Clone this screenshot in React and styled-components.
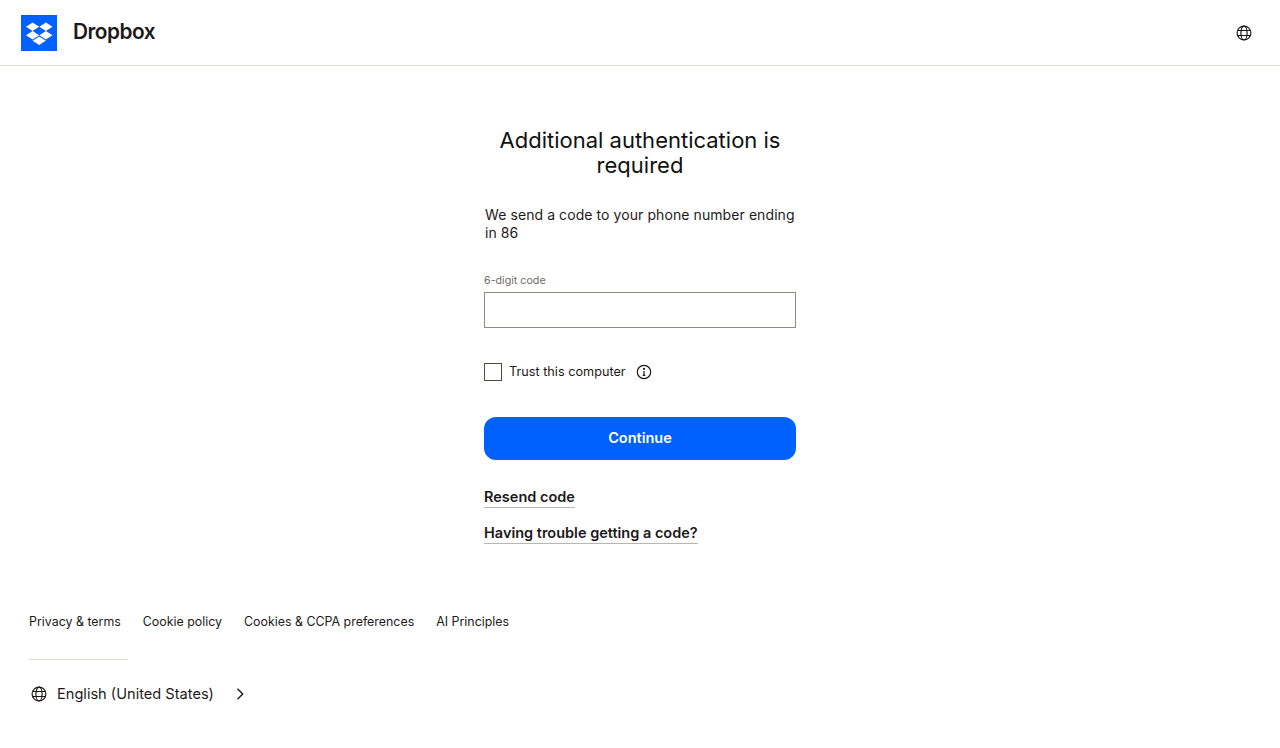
import React from "react";
import styled, { createGlobalStyle } from "styled-components";

const Global = createGlobalStyle`
  html, body { margin: 0; padding: 0; background: #fff; }
  body { font-family: "Inter", "Liberation Sans", sans-serif; color: #1e1919; }
  * { box-sizing: border-box; }
`;
const Page = styled.div`height: 748px; display: flex; flex-direction: column; overflow: hidden;`;
const Header = styled.header`height: 66px; flex: none; border-bottom: 1px solid #dfdcd8; display: flex; align-items: center; justify-content: space-between; padding: 1px 28px 0 21px;`;
const Brand = styled.div`display: flex; align-items: center; gap: 16px;`;
const Wordmark = styled.span`font-size: 20.8px; font-weight: 600; letter-spacing: -0.5px; color: #1e1919; margin-top: -4px;`;
const Main = styled.main`width: 312px; margin: 62px auto 0; flex: none;`;
const Title = styled.h1`margin: 0 0 28px; font-size: 22px; line-height: 25px; font-weight: 400; text-align: center; color: #111;`;
const Lead = styled.p`margin: 0 0 32px; padding-left: 1px; font-size: 14px; letter-spacing: 0.08px; line-height: 18px; color: #1e1919;`;
const FieldLabel = styled.label`display: block; font-size: 10.7px; line-height: 14px; color: #736c64; margin-bottom: 4px;`;
const Input = styled.input`display: block; width: 100%; height: 36px; border: 1px solid #8d8983; background: #fff; outline: none;`;
const TrustRow = styled.div`display: flex; align-items: center; margin-top: 35px; height: 18px; font-size: 12.7px; color: #1e1919;`;
const TrustLabel = styled.span`padding-bottom: 2px;`;
const Box = styled.span`width: 18px; height: 18px; border: 1px solid #4e4a45; margin-right: 7px;`;
const InfoWrap = styled.span`display: flex; margin-left: 10px;`;
const Primary = styled.button`display: block; width: 100%; height: 43px; margin-top: 36px; padding: 0 0 2px; border: 0; border-radius: 12px; background: #0061fe; color: #fff; font: 600 14.5px "Inter", sans-serif;`;
const Links = styled.div`display: flex; flex-direction: column; align-items: flex-start; gap: 14px; margin-top: 26px;`;
const TextLink = styled.a`font-size: 14.5px; line-height: 21px; font-weight: 600; color: #1e1919; border-bottom: 1px solid #bbb5ae;`;
const Footer = styled.footer`margin-top: 69px; padding-left: 29px;`;
const FootLinks = styled.nav`display: flex; gap: 22px; font-size: 12.4px; line-height: 18px; color: #1e1919;`;
const Rule = styled.hr`width: 99px; height: 1px; border: 0; background: #dfdcd8; margin: 28px 0 0;`;
const Lang = styled.div`display: flex; align-items: center; margin: 25px 0 0 2px; font-size: 14.6px; line-height: 18px;`;
const LangLabel = styled.span`margin: 0 19px 0 10px;`;

const Globe = () => (
  <svg width="16" height="16" viewBox="0 0 16 16" fill="none" stroke="#1e1919" strokeWidth="1.2">
    <circle cx="8" cy="8" r="6.9" />
    <ellipse cx="8" cy="8" rx="3.1" ry="6.9" />
    <path d="M1.6 5.5h12.8M1.6 10.5h12.8" />
  </svg>
);
const Logo = () => (
  <svg width="36" height="36" viewBox="0 0 36 36">
    <rect width="36" height="36" fill="#0061fe" />
    <path fill="#fff" d="M11.6 7.6 5 11.8l6.6 4.2 6.6-4.2zM24.9 7.6l-6.6 4.2 6.6 4.2 6.6-4.2zM5 20.2l6.6 4.2 6.6-4.2-6.6-4.2zM24.9 16l-6.6 4.2 6.6 4.2 6.6-4.2zM11.6 25.8l6.6 4.2 6.6-4.2-6.6-4.2z" />
  </svg>
);
const Info = () => (
  <svg width="16" height="16" viewBox="0 0 16 16" fill="none" stroke="#1e1919" strokeWidth="1.2">
    <circle cx="8" cy="8" r="6.7" />
    <path d="M8 7v4.4M6.7 11.4h2.6" />
    <circle cx="8" cy="4.8" r=".5" fill="#1e1919" />
  </svg>
);
const Chevron = () => (
  <svg width="14" height="14" viewBox="0 0 14 14" fill="none" stroke="#1e1919" strokeWidth="1.4">
    <path d="M4.5 1.8 9.7 7l-5.2 5.2" />
  </svg>
);

export default function App() {
  return (
    <Page>
      <Global />
      <Header>
        <Brand><Logo /><Wordmark>Dropbox</Wordmark></Brand>
        <Globe />
      </Header>
      <Main>
        <Title>Additional authentication is required</Title>
        <Lead>We send a code to your phone number ending in 86</Lead>
        <FieldLabel>6-digit code</FieldLabel>
        <Input />
        <TrustRow><Box /><TrustLabel>Trust this computer</TrustLabel><InfoWrap><Info /></InfoWrap></TrustRow>
        <Primary>Continue</Primary>
        <Links>
          <TextLink>Resend code</TextLink>
          <TextLink>Having trouble getting a code?</TextLink>
        </Links>
      </Main>
      <Footer>
        <FootLinks>
          <span>Privacy &amp; terms</span><span>Cookie policy</span><span>Cookies &amp; CCPA preferences</span><span>AI Principles</span>
        </FootLinks>
        <Rule />
        <Lang><Globe /><LangLabel>English (United States)</LangLabel><Chevron /></Lang>
      </Footer>
    </Page>
  );
}
